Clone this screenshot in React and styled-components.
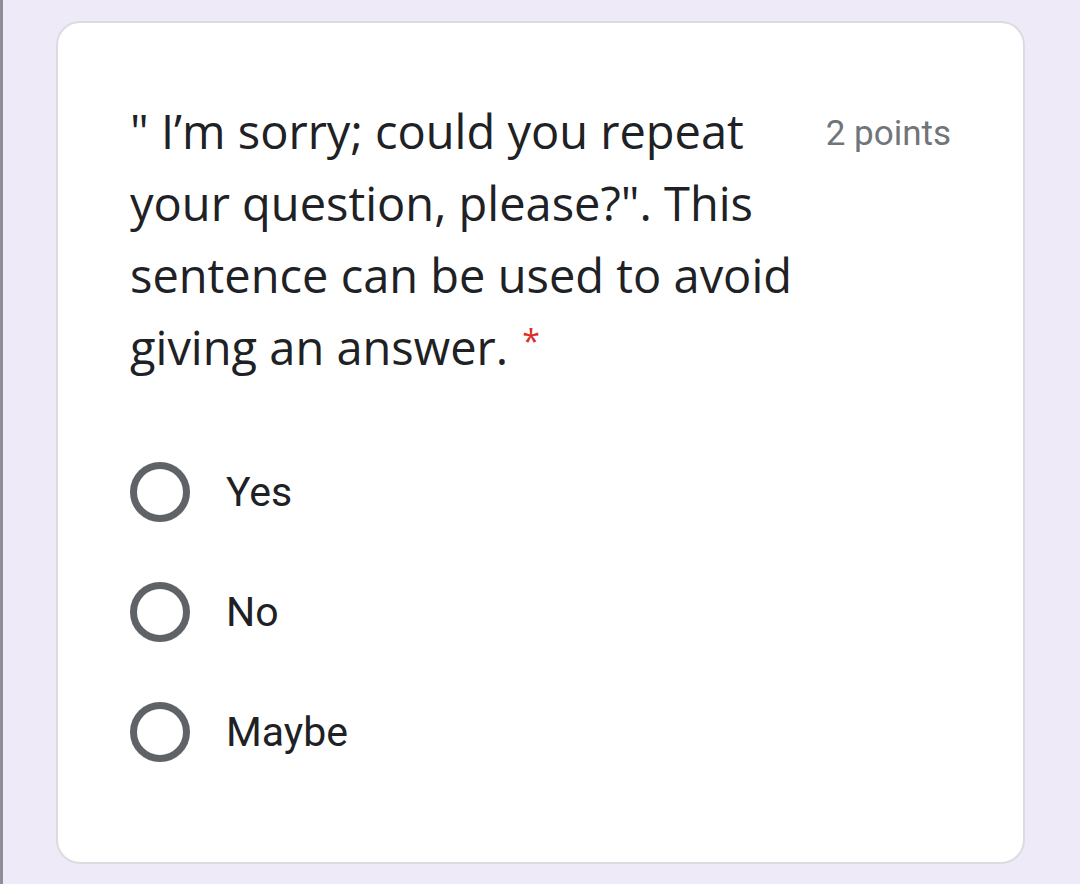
import React from "react";
import styled, { createGlobalStyle } from "styled-components";

const GlobalStyle = createGlobalStyle`
  html, body { margin: 0; padding: 0; }
  body { background: #eeeaf8; }
  * { box-sizing: border-box; }
`;

const Page = styled.div`
  min-height: 884px;
  background: #eeeaf8;
  border-left: 3px solid #8f8e94;
  padding: 21px 55px 20px 53px;
`;

const Card = styled.div`
  background: #ffffff;
  border: 2px solid #dcdbe2;
  border-radius: 24px;
  height: 843px;
  padding: 72px 72px 0 72px;
`;

const Header = styled.div`
  display: flex;
  justify-content: space-between;
  align-items: flex-start;
`;

const Title = styled.div`
  font-family: "Open Sans", sans-serif;
  font-size: 47px;
  line-height: 72px;
  height: 288px;
  color: #202124;
  white-space: nowrap;
`;

const Required = styled.span`
  color: #d93025;
  font-size: 32px;
  line-height: 1;
  padding-left: 14px;
  vertical-align: 12px;
`;

const Points = styled.div`
  font-family: Roboto, sans-serif;
  font-size: 35px;
  line-height: 72px;
  padding-top: 3px;
  color: #70757a;
  white-space: nowrap;
`;

const Options = styled.div`
  display: flex;
  flex-direction: column;
  gap: 60px;
  margin-top: 79px;
`;

const Option = styled.label`
  display: flex;
  align-items: center;
  height: 60px;
`;

const Radio = styled.span`
  width: 60px;
  height: 60px;
  border-radius: 50%;
  border: 7px solid #5f6368;
  flex: none;
`;

const OptionLabel = styled.span`
  font-family: Roboto, sans-serif;
  font-size: 41px;
  color: #202124;
  margin-left: 36px;
`;

export default function App() {
  const options = ["Yes", "No", "Maybe"];
  return (
    <>
      <GlobalStyle />
      <Page>
        <Card>
          <Header>
            <Title>
              " I’m sorry; could you repeat
              <br />
              your question, please?". This
              <br />
              sentence can be used to avoid
              <br />
              giving an answer.<Required>*</Required>
            </Title>
            <Points>2 points</Points>
          </Header>
          <Options>
            {options.map((o) => (
              <Option key={o}>
                <Radio />
                <OptionLabel>{o}</OptionLabel>
              </Option>
            ))}
          </Options>
        </Card>
      </Page>
    </>
  );
}
